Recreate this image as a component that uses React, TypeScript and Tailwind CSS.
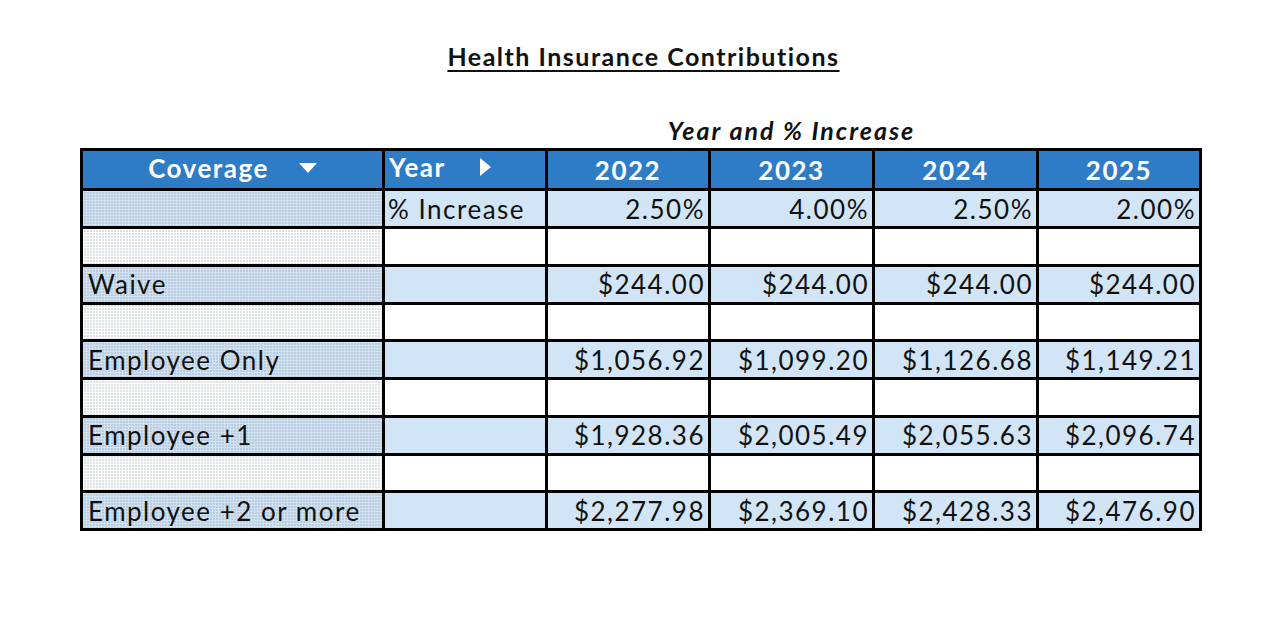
const years = ["2022", "2023", "2024", "2025"];
const increases = ["2.50%", "4.00%", "2.50%", "2.00%"];

type Row = { label: string; values: string[] } | null;

const rows: Row[] = [
  null,
  { label: "Waive", values: ["$244.00", "$244.00", "$244.00", "$244.00"] },
  null,
  { label: "Employee Only", values: ["$1,056.92", "$1,099.20", "$1,126.68", "$1,149.21"] },
  null,
  { label: "Employee +1", values: ["$1,928.36", "$2,005.49", "$2,055.63", "$2,096.74"] },
  null,
  { label: "Employee +2 or more", values: ["$2,277.98", "$2,369.10", "$2,428.33", "$2,476.90"] },
];

const cell = "border-[3px] border-black p-0";
const dots =
  "bg-[radial-gradient(circle,#7f8a96_0.7px,transparent_0.8px)] bg-[length:3px_3px]";

export default function App() {
  return (
    <div
      className="w-[1287px] h-[636px] bg-white text-[#111] flex flex-col"
      style={{ fontFamily: "Lato, 'Liberation Sans', sans-serif" }}
    >
      <h1 className="mt-[41px] text-center text-[25px] font-bold tracking-[1.5px] underline underline-offset-[4px] decoration-2 leading-[30px]">
        Health Insurance Contributions
      </h1>

      <div className="mt-[44px] flex">
        <div className="w-[383px]" />
        <div className="w-[817px] text-center text-[25px] font-bold italic tracking-[2px] leading-[30px]">
          Year and % Increase
        </div>
      </div>

      <table className="ml-[80px] mt-[3px] w-[1119px] border-collapse border-[3px] border-black table-fixed text-[26px] leading-none tracking-[1.5px]">
        <colgroup>
          <col className="w-[302px]" />
          <col className="w-[163px]" />
          <col className="w-[163px]" />
          <col className="w-[164px]" />
          <col className="w-[164px]" />
          <col className="w-[163px]" />
        </colgroup>
        <thead>
          <tr className="h-[40px] bg-[#2e7bc6] text-white font-bold">
            <th className={cell}>
              <div className="flex items-center justify-center gap-[30px] pb-[4px]">
                <span>Coverage</span>
                <svg width="18" height="10" viewBox="0 0 18 10">
                  <path d="M0 0 H18 L9 10 Z" fill="white" />
                </svg>
              </div>
            </th>
            <th className={cell}>
              <div className="flex items-center pl-[4px] pb-[5px]">
                <span>Year</span>
                <svg className="ml-[34px]" width="11" height="18" viewBox="0 0 11 18">
                  <path d="M0 0 L11 9 L0 18 Z" fill="white" />
                </svg>
              </div>
            </th>
            {years.map((y) => (
              <th key={y} className={`${cell} text-center pt-[1px]`}>
                {y}
              </th>
            ))}
          </tr>
        </thead>
        <tbody>
          <tr className="h-[38px]">
            <td className={`${cell} bg-[#cfe2f4] ${dots}`} />
            <td className={`${cell} bg-[#d2e5f6] pl-[3px] text-left`}>% Increase</td>
            {increases.map((v, i) => (
              <td key={i} className={`${cell} bg-[#d2e5f6] text-right pr-[3px]`}>
                {v}
              </td>
            ))}
          </tr>
          {rows.map((r, idx) =>
            r === null ? (
              <tr key={idx} className="h-[37.5px]">
                <td className={`${cell} bg-white ${dots}`} />
                {[0, 1, 2, 3, 4].map((k) => (
                  <td key={k} className={`${cell} bg-white`} />
                ))}
              </tr>
            ) : (
              <tr key={idx} className="h-[38px]">
                <td className={`${cell} bg-[#cfe2f4] ${dots} pl-[5px] text-left`}>{r.label}</td>
                <td className={`${cell} bg-[#d2e5f6]`} />
                {r.values.map((v, i) => (
                  <td key={i} className={`${cell} bg-[#d2e5f6] text-right pr-[3px]`}>
                    {v}
                  </td>
                ))}
              </tr>
            )
          )}
        </tbody>
      </table>
    </div>
  );
}
